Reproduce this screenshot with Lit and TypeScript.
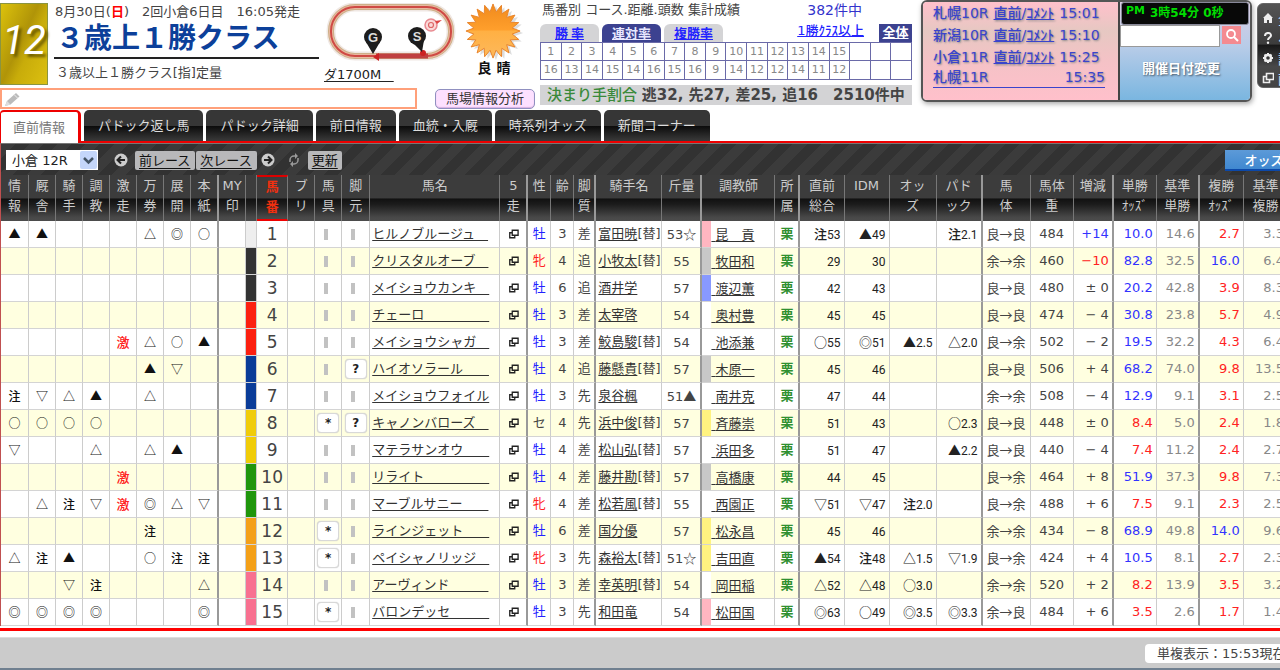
import { LitElement, html, svg, css, nothing } from "lit";
import { customElement, state } from "lit/decorators.js";
import { classMap } from "lit/directives/class-map.js";

interface Horse {
  no: number;
  frame: string;
  marks: string;
  gear?: boolean;
  foot?: boolean;
  name: string;
  sex: string;
  age: number;
  style: string;
  jockey: string;
  changed: boolean;
  load: string;
  trainer: string;
  strip: string;
  scores: [string, string, string, string];
  going: string;
  weight: number;
  diff: string;
  odds: [string, string, string, string];
}

const h = (
  no: number, frame: string, marks: string, kit: string, name: string, sex: string, age: number,
  style: string, jockey: string, changed: boolean, load: string, trainer: string, strip: string,
  scores: string, going: string, weight: number, diff: string, odds: string,
): Horse => ({
  no, frame, marks, gear: kit.includes("g"), foot: kit.includes("f"), name, sex, age, style, jockey,
  changed, load, trainer, strip, scores: scores.split(",") as Horse["scores"], going, weight, diff,
  odds: odds.split(",") as Horse["odds"],
});

const HORSES: Horse[] = [
  h(1, "white", "▲▲___△◎○", "", "ヒルノブルージュ", "牡", 3, "差", "富田暁", true, "53☆", "昆　貢", "pink", "注53,▲49,,注2.1", "良→良", 484, "+14", "10.0,14.6,2.7,3.3"),
  h(2, "black", "________", "", "クリスタルオーブ", "牝", 4, "追", "小牧太", true, "55", "牧田和", "gray", "29,30,,", "余→余", 460, "−10", "82.8,32.5,16.0,6.4"),
  h(3, "black", "________", "", "メイショウカンキ", "牡", 6, "追", "酒井学", false, "57", "渡辺薫", "blue", "42,43,,", "良→良", 480, "± 0", "20.2,42.8,3.9,8.3"),
  h(4, "red", "________", "", "チェーロ", "牡", 3, "差", "太宰啓", false, "54", "奥村豊", "white", "45,45,,", "良→良", 474, "− 4", "30.8,23.8,5.7,4.9"),
  h(5, "red", "____激△○▲", "", "メイショウシャガ", "牡", 3, "差", "鮫島駿", true, "54", "池添兼", "white", "○55,◎51,▲2.5,△2.0", "良→余", 502, "− 2", "19.5,32.2,4.3,6.4"),
  h(6, "blue", "_____▲▽_", "f", "ハイオソラール", "牡", 4, "追", "藤懸貴", true, "57", "木原一", "gray", "45,46,,", "良→良", 506, "+ 4", "68.2,74.0,9.8,13.5"),
  h(7, "blue", "注▽△▲_△__", "", "メイショウフォイル", "牡", 3, "先", "泉谷楓", false, "51▲", "南井克", "white", "47,44,,", "余→余", 508, "− 4", "12.9,9.1,3.1,2.5"),
  h(8, "yellow", "○○○○____", "gf", "キャノンバローズ", "セ", 4, "先", "浜中俊", true, "57", "斉藤崇", "yellow", "51,43,,○2.3", "良→良", 448, "± 0", "8.4,5.0,2.4,1.8"),
  h(9, "yellow", "▽__△_△▲_", "", "マテラサンオウ", "牡", 4, "差", "松山弘", true, "57", "浜田多", "white", "51,47,,▲2.2", "良→良", 440, "− 4", "7.4,11.2,2.4,2.7"),
  h(10, "green", "____激___", "", "リライト", "牡", 4, "差", "藤井勘", true, "57", "高橋康", "gray", "44,45,,", "良→余", 464, "+ 8", "51.9,37.3,9.8,7.3"),
  h(11, "green", "_△注▽激◎△▽", "", "マーブルサニー", "牝", 4, "差", "松若風", true, "55", "西園正", "white", "▽51,▽47,注2.0,", "良→余", 488, "+ 6", "7.5,9.1,2.3,2.5"),
  h(12, "orange", "_____注__", "g", "ラインジェット", "牡", 6, "差", "国分優", false, "57", "松永昌", "yellow", "45,46,,", "余→余", 434, "− 8", "68.9,49.8,14.0,9.6"),
  h(13, "orange", "△注▲__○注注", "g", "ペイシャノリッジ", "牝", 3, "先", "森裕太", true, "51☆", "吉田直", "yellow", "▲54,注48,△1.5,▽1.9", "良→余", 424, "+ 4", "10.5,8.1,2.7,2.3"),
  h(14, "rose", "__▽注___△", "", "アーヴィンド", "牡", 3, "差", "幸英明", true, "54", "岡田稲", "white", "△52,△48,○3.0,", "余→余", 520, "+ 2", "8.2,13.9,3.5,3.2"),
  h(15, "rose", "◎◎◎◎___◎", "g", "バロンデッセ", "牡", 3, "先", "和田竜", false, "54", "松田国", "pink", "◎63,○49,◎3.5,◎3.3", "余→良", 484, "+ 6", "3.5,2.6,1.7,1.4"),
];

/* label, width, heavy right rule */
const COLUMNS: [string, number, boolean?][] = [
  ["情 報", 28], ["厩 舎", 27], ["騎 手", 27], ["調 教", 27], ["激 走", 27], ["万 券", 27], ["展 開", 27],
  ["本 紙", 28, true], ["MY 印", 27], ["", 11], ["馬 番", 31], ["ブ リ", 27], ["馬 具", 27], ["脚 元", 28],
  ["馬名", 130], ["5 走", 28, true], ["性", 23], ["齢", 23], ["脚 質", 22, true], ["騎手名", 66],
  ["斤量", 40, true], ["調教師", 73], ["所 属", 25, true], ["直前 総合", 44], ["IDM", 45], ["オッ ズ", 47],
  ["パド ック", 46, true], ["馬 体", 48], ["馬体 重", 43], ["増減", 40, true], ["単勝 ｵｯｽﾞ", 43],
  ["基準 単勝", 43, true], ["複勝 ｵｯｽﾞ", 44], ["基準 複勝", 44],
];

const windowsIcon = svg`<path d="M4.5 1.5h7v6h-7z M4 4.5H1.500v6h6V8" fill="none" stroke="currentColor" stroke-width="1.6"/>`;

@customElement("race-header")
class RaceHeader extends LitElement {
  static styles = css`
    :host { display: block; }
    * { box-sizing: border-box; }
    a { color: inherit; }
    .bar { display: flex; align-items: flex-start; height: 110px; }
    .race { display: flex; flex-direction: column; flex: none; width: 540px; gap: 4px; padding-top: 3px; }
    .info { display: flex; height: 81px; }
    .badge {
      flex: none; width: 48px; height: 82px; border: 1px solid #8a9440; color: #fff; padding-bottom: 6px;
      background: linear-gradient(115deg, #dcc20c, #b09408 45%, #c8ac0a 60%, #dcc010);
      display: flex; align-items: center; justify-content: center;
      font: italic 400 40px/48px Roboto, sans-serif; text-shadow: 3px 3px 3px #6b5a00;
    }
    .titles { margin-left: 6px; width: 265px; flex: none; white-space: nowrap; }
    .when { margin: 0; line-height: 18px; padding-left: 1px; white-space: pre; }
    .sun-day { color: #f00; font-weight: bold; }
    h1 { margin: 0; font-size: 28px; line-height: 36px; font-weight: bold; color: #0c409a; padding-left: 2px; border-bottom: 2px solid #222; }
    .cond { margin: 0; padding: 4px 0 0 2px; line-height: 20px; }
    .course { margin-left: 5px; width: 140px; flex: none; }
    .course svg { display: block; }
    .dist { white-space: pre; line-height: 18px; display: block; margin-top: 4px; color: #222; text-underline-offset: 2px; }
    .weather { width: 60px; flex: none; text-align: center; font-weight: bold; font-size: 14px; line-height: 14px; color: #111; }
    .weather svg { display: block; margin: 0 auto; }
    .memo { display: flex; align-items: center; gap: 18px; }
    .note { display: flex; align-items: center; width: 417px; height: 21px; border: 2px solid #ffa07a; padding-left: 2px; background: #fff; }
    .note input { flex: 1; border: 0; outline: 0; background: none; height: 16px; padding: 0 4px; font: inherit; }
    .analyze {
      width: 100px; height: 20px; padding: 0; border: 1px solid #9090c0; border-radius: 5px; font: inherit; line-height: 18px; color: #333;
      background: #fde0ff; box-shadow: inset 0 -1px 1px #d8b0e0; white-space: nowrap;
    }
    .stats { flex: none; width: 372px; }
    .line { display: flex; line-height: 20px; padding: 0 2px; white-space: nowrap; }
    .line b { font-weight: normal; color: #33c; margin-left: auto; margin-right: 48px; font-size: 14px; }
    .picks { display: flex; gap: 3px; align-items: flex-end; height: 22px; }
    .pick {
      width: 59px; height: 18px; padding: 0; border: 0; border-radius: 6px 6px 0 0; background: #d4d4d6; color: #22f;
      font: bold 13px/18px "Noto Sans CJK JP", sans-serif; text-decoration: underline;
    }
    .pick.on { background: #3c4290; color: #e8e8ff; }
    .klass { color: #22f; font-size: 13px; line-height: 22px; margin-left: auto; margin-right: 12px; white-space: nowrap; font-weight: 500; }
    .all { background: #3c4290; color: #fff; text-decoration: underline; font-weight: bold; line-height: 18px; width: 33px; text-align: center; }
    .nums { border-collapse: collapse; table-layout: fixed; width: 100%; font-size: 11px; color: #888; }
    .nums td { border: 1px solid #6a6aa8; padding: 0; text-align: center; height: 18px; line-height: 16px; }
    .nums tr + tr td { height: 19px; }
    .finish { margin: 5px 0 0; background: #d3d3d5; line-height: 20px; font-size: 15px; padding-left: 7px; white-space: pre; color: #444; }
    .finish strong { color: #3a8a3a; font-weight: 500; }
    .finish span { font-weight: bold; }
    .panel {
      flex: none; display: flex; width: 331px; height: 102px; margin: 0 5px 0 9px; border: 2px solid #555; border-radius: 6px;
      box-shadow: 1px 2px 5px #aaa; overflow: hidden;
    }
    .next {
      width: 197px; flex: none; margin: 0; padding: 0 0 0 10px; list-style: none; font-size: 14px; line-height: 22px; color: #3a44cc;
      text-shadow: 1px 1px 2px #888; white-space: nowrap; border-right: 2px solid #444; font-weight: 500;
      background: linear-gradient(#ffc0cb, #e6c8c2 30%, #f4c2c6 60%, #ffc0cb);
    }
    .next li { display: flex; gap: 5px; }
    .next .whole { display: flex; justify-content: space-between; width: 172px; border-bottom: 1px solid #3a44cc; line-height: 19px; text-decoration: none; }
    .tools { flex: 1; background: linear-gradient(#dccde4, #b8cce8 45%, #7ab6e0); }
    .clock {
      margin: 0 1px; background: #080808; border: 1px solid #889; border-radius: 3px; color: #0d0; height: 23px; line-height: 21px; padding-left: 4px;
      white-space: nowrap; font-weight: bold; font-size: 12px; display: flex; gap: 5px;
    }
    .clock small { font-size: 11px; line-height: 16px; }
    .search { display: flex; gap: 2px; }
    .search input { width: 100px; height: 22px; border: 1px solid #999; background: #fff; padding: 0 3px; font: inherit; }
    .search button { width: 19px; height: 18px; margin-top: 1px; border: 0; padding: 0; background: #f48a90; display: grid; place-items: center; }
    .date { display: block; color: #fff; padding-left: 22px; line-height: 20px; margin-top: 12px; font-weight: bold; text-decoration: none; text-shadow: 1px 1px 2px #456; }
    .menu {
      flex: none; width: 120px; height: 85px; margin-top: 3px; border: 1px solid #666; border-radius: 6px; color: #fff;
      background: linear-gradient(#555, #3c3c3c 48%, #181818 50%, #484848 75%, #444); padding: 4px 0 0 4px;
    }
    .menu a { display: flex; align-items: center; gap: 4px; height: 20px; color: #cfe0ff; text-decoration: none; white-space: nowrap; }
    .menu svg { color: #eee; flex: none; }
  `;

  private sunPoints() {
    const n = 20;
    return Array.from({ length: n * 2 }, (_, i) => {
      const r = i % 2 ? 20 : 28;
      const a = (Math.PI * i) / n - Math.PI / 2;
      return `${(29 + r * Math.cos(a)).toFixed(1)},${(29 + r * Math.sin(a)).toFixed(1)}`;
    }).join(" ");
  }

  render() {
    const top = Array.from({ length: 18 }, (_, i) => (i < 15 ? i + 1 : ""));
    const low = [16, 13, 14, 15, 14, 16, 15, 16, 9, 14, 12, 12, 14, 11, 12, "", "", ""];
    const races = [["札幌10R", "15:01"], ["新潟10R", "15:10"], ["小倉11R", "15:25"]];
    return html`<header class="bar">
      <div class="race">
        <div class="info">
          <div class="badge">12</div>
          <div class="titles">
            <p class="when">8月30日(<span class="sun-day">日</span>)　2回小倉6日目　16:05発走</p>
            <h1>３歳上１勝クラス</h1>
            <p class="cond">３歳以上１勝クラス[指]定量</p>
          </div>
          <div class="course">
            <svg width="134" height="59" viewBox="0 0 134 59" aria-hidden="true">
              <rect x="7" y="4" width="120" height="49" rx="24" fill="none" stroke="#f0e8e4" stroke-width="9"/>
              <rect x="7" y="4" width="120" height="49" rx="24" fill="none" stroke="#cdb088" stroke-width="6"/>
              <rect x="7" y="4" width="120" height="49" rx="24" fill="none" stroke="#e8b8a0" stroke-width="4"/>
              <rect x="7" y="4" width="120" height="49" rx="24" fill="none" stroke="#cf4a44" stroke-width="2"/>
              <path d="M52 53H104" stroke="#c04040" stroke-width="5"/>
              <path d="M49 54l6-4v8z" fill="#c22"/>
              <circle cx="99" cy="50" r="3" fill="#c22"/>
              <circle cx="107" cy="22" r="6" fill="#fbd8d8" stroke="#e88a90" stroke-width="1.500"/>
              <circle cx="107" cy="22" r="2.500" fill="none" stroke="#d66" stroke-width="1.200"/>
              <path d="M111 18l7-1-5 4z" fill="#d44"/>
              <path d="M42 39h14l-7 12z M86 37h14l-2 12z" fill="#1c1c1c"/>
              <circle cx="49" cy="34" r="9" fill="#1c1c1c"/>
              <circle cx="93" cy="33" r="9" fill="#1c1c1c"/>
              <text x="49" y="39" text-anchor="middle" font-family="Liberation Sans, sans-serif" font-weight="bold" font-size="13" fill="#ddd">G</text>
              <text x="93" y="38" text-anchor="middle" font-family="Liberation Sans, sans-serif" font-weight="bold" font-size="13" fill="#ddd">S</text>
            </svg>
            <a class="dist" href="#course">ダ1700M   </a>
          </div>
          <div class="weather">
            <svg width="60" height="58" viewBox="0 0 60 60" aria-hidden="true">
              <defs><linearGradient id="sun" x1="0" y1="0" x2="0" y2="1">
                <stop offset="0" stop-color="#f08a1c"/><stop offset=".48" stop-color="#ff9f2c"/>
                <stop offset=".5" stop-color="#ffb043"/><stop offset="1" stop-color="#fdb95c"/>
              </linearGradient></defs>
              <polygon points=${this.sunPoints()} fill="#bbb" transform="translate(3 2)" opacity=".5"/>
              <polygon points=${this.sunPoints()} fill="url(#sun)" stroke="#e8842a" stroke-width="1"/>
            </svg>
            良 晴
          </div>
        </div>
        <div class="memo">
          <label class="note">
            <svg width="17" height="16" viewBox="0 0 17 16" aria-hidden="true">
              <path d="M1 15l2-5 9-8 3.500 3.500-9 8z" fill="#bbb"/><path d="M1 15l2-5 3.500 3.500z" fill="#ddd"/><path d="M10 3.500l3.500 3.500" stroke="#eee"/>
            </svg>
            <input aria-label="メモ" />
          </label>
          <button class="analyze">馬場情報分析</button>
        </div>
      </div>

      <section class="stats">
        <div class="line"><span>馬番別 コース.距離.頭数 集計成績</span><b>382件中</b></div>
        <div class="picks">
          <button class="pick">勝 率</button>
          <button class="pick on">連対率</button>
          <button class="pick">複勝率</button>
          <a class="klass" href="#class">1勝ｸﾗｽ以上</a>
          <a class="all" href="#all">全体</a>
        </div>
        <table class="nums">
          <tr>${top.map((n) => html`<td>${n}</td>`)}</tr>
          <tr>${low.map((n) => html`<td>${n}</td>`)}</tr>
        </table>
        <p class="finish"><strong>決まり手割合</strong> <span>逃32, 先27, 差25, 追16　2510件中</span></p>
      </section>

      <div class="panel">
        <ul class="next">
          ${races.map(([r, t]) => html`<li><span>${r}</span><span><a href="#last">直前</a>/<a href="#comment">ｺﾒﾝﾄ</a></span><span>${t}</span></li>`)}
          <li><a class="whole" href="#sapporo11"><span>札幌11R</span><span>15:35</span></a></li>
        </ul>
        <div class="tools">
          <div class="clock"><small>PM</small><span>3時54分 0秒</span></div>
          <div class="search">
            <input type="text" aria-label="検索" />
            <button aria-label="検索">
              <svg width="14" height="14" viewBox="0 0 14 14"><circle cx="6" cy="6" r="4" fill="none" stroke="#fff" stroke-width="1.800"/><path d="M9 9l4 4" stroke="#fff" stroke-width="2"/></svg>
            </button>
          </div>
          <a class="date" href="#date">開催日付変更</a>
        </div>
      </div>

      <nav class="menu">
        <a href="#home"><svg width="12" height="12" viewBox="0 0 12 12"><path d="M6 1L1 6h1v5h3V8h2v3h3V6h1z" fill="currentColor"/></svg>全</a>
        <a href="#help"><svg width="12" height="12" viewBox="0 0 12 12"><path d="M3 4c0-4 6-4 6-.500C9 5.500 6 5.500 6 8" fill="none" stroke="currentColor" stroke-width="2"/><circle cx="6" cy="10.800" r="1.200" fill="currentColor"/></svg>ヘ</a>
        <a href="#config"><svg width="12" height="12" viewBox="0 0 12 12"><circle cx="6" cy="6" r="3" fill="none" stroke="currentColor" stroke-width="2.400"/><path d="M6 1v2M6 9v2M1 6h2M9 6h2M2.500 2.500l1 1M8.500 8.500l1 1M9.500 2.500l-1 1M3.500 8.500l-1 1" stroke="currentColor" stroke-width="2"/></svg>設</a>
        <a href="#window"><svg width="12" height="12" viewBox="0 0 12 12">${windowsIcon}</svg>画</a>
      </nav>
    </header>`;
  }
}

@customElement("race-table")
class RaceTable extends LitElement {
  static styles = css`
    :host { display: block; border-left: 1px solid #c05050; }
    * { box-sizing: border-box; }
    table { table-layout: fixed; width: 100%; min-width: 1287px; border-spacing: 0; }
    th, td { padding: 0; overflow: hidden; white-space: nowrap; border-right: 1px solid #ccc; text-align: center; }
    th {
      height: 46px; vertical-align: top; font-weight: normal; color: #ccc; line-height: 20px; padding: 1px 0 4px; border-right-color: #777; white-space: pre-line;
    }
    thead tr { background: linear-gradient(#3c3c3c 50%, #111 52%, #1c1c1c 64%, #484848 92%, #4c4c4c); }
    td { height: 27px; line-height: 20px; border-bottom: 1px solid #d4d4d4; }
    tbody tr:nth-child(even) { background: #ffffe0; }
    .heavy { border-right: 2px solid #999; }
    .number { border-top: 2px solid #d00; border-bottom: 2px solid #e00; color: #f03010; font-weight: bold; padding: 0; line-height: 20px; }
    .sym { font-family: "Noto Sans CJK JP", sans-serif; }
    .hot { color: #f22; font-weight: 500; }
    .mark { color: #111; font-weight: 500; font-size: 12px; }
    .no { font-size: 17px; color: #444; }
    .stick { display: inline-block; width: 4px; height: 11px; background: #c2c2c2; margin-right: 5px; vertical-align: middle; }
    .chip {
      width: 22px; height: 20px; padding: 0; border: 1px solid #d8d8d8; border-radius: 4px; background: #fff; box-shadow: 0 0 1px #bbb; color: #222;
      font: bold 12px/18px "DejaVu Sans", sans-serif; display: block; margin: 0 auto;
    }
    .left { text-align: left; padding-left: 2px; }
    a { color: #333; text-underline-offset: 2px; }
    .name { white-space: pre; }
    .open { border: 0; background: none; padding: 0; display: block; margin: 0 auto; height: 10px; color: #222; }
    .open svg { display: block; }
    .male { color: #22f; } .female { color: #f22; }
    .trainer { text-align: left; }
    .tr { display: flex; height: 26px; align-items: center; }
    .tr a { white-space: pre; padding-top: 1px; }
    .strip { width: 9px; height: 26px; }
    .belong { color: #2f9030; font-weight: bold; }
    .score { text-align: right; padding-right: 3px; color: #222; font-size: 12px; font-family: Roboto, "Noto Sans CJK JP", sans-serif; }
    .score .sym { font-size: 13px; font-weight: 500; }
    .right { text-align: right; padding-right: 3px; }
    .base { color: #888; }
    .blue { color: #33f; } .red { color: #f22; }
    .f-white { background: #eee; } .f-black { background: #333; } .f-red { background: #fc2010; } .f-blue { background: #0a3c98; }
    .f-yellow { background: #f0cc08; } .f-green { background: #20960c; } .f-orange { background: #f4a018; } .f-rose { background: #f87090; }
    .s-pink { background: #ffb6c1; } .s-gray { background: #c8c8c8; } .s-blue { background: #8899ff; } .s-white { background: #fff; } .s-yellow { background: #fff380; }
  `;

  private odds(v: string) {
    return Number(v) >= 10 ? "blue" : "red";
  }

  private row(r: Horse) {
    const sexClass = { male: r.sex === "牡", female: r.sex === "牝" };
    return html`<tr>
      ${[...r.marks].map((m, i) => html`<td class=${classMap({ mark: m !== "激", sym: true, hot: m === "激", heavy: i === 7 })}>${m === "_" ? nothing : m}</td>`)}
      <td></td>
      <td class="f-${r.frame}"></td>
      <td class="no">${r.no}</td>
      <td></td>
      <td>${r.gear ? html`<button class="chip">*</button>` : html`<span class="stick"></span>`}</td>
      <td>${r.foot ? html`<button class="chip">?</button>` : html`<span class="stick"></span>`}</td>
      <td class="left"><a class="name" href="#horse-${r.no}">${r.name.padEnd(9, "　")}</a></td>
      <td class="heavy"><button class="open" aria-label="5走"><svg width="11" height="10" viewBox="0 0 12 12">${windowsIcon}</svg></button></td>
      <td class=${classMap(sexClass)}>${r.sex}</td>
      <td>${r.age}</td>
      <td class="heavy">${r.style}</td>
      <td class="left"><a href="#jockey-${r.no}">${r.jockey}</a>${r.changed ? "[替]" : nothing}</td>
      <td class="heavy">${r.load.slice(0, 2)}<span class="sym">${r.load.slice(2)}</span></td>
      <td class="trainer"><div class="tr"><span class="strip s-${r.strip}"></span><a href="#trainer-${r.no}"> ${r.trainer}</a></div></td>
      <td class="belong heavy">栗</td>
      ${r.scores.map((s, i) => {
        const sym = s.replace(/[\d.]/g, "");
        return html`<td class=${classMap({ score: true, heavy: i === 3 })}><span class="sym">${sym}</span>${s.slice(sym.length)}</td>`;
      })}
      <td class="sym">${r.going}</td>
      <td>${r.weight}</td>
      <td class=${classMap({ right: true, heavy: true, blue: r.diff === "+14", red: r.diff === "−10" })}>${r.diff}</td>
      <td class="right ${this.odds(r.odds[0])}">${r.odds[0]}</td>
      <td class="right base heavy">${r.odds[1]}</td>
      <td class="right ${this.odds(r.odds[2])}">${r.odds[2]}</td>
      <td class="right base">${r.odds[3]}</td>
    </tr>`;
  }

  render() {
    return html`<table>
      <colgroup>${COLUMNS.map(([, w]) => html`<col style="width:${w}px" />`)}</colgroup>
      <thead><tr>
        ${COLUMNS.map(([label, , heavy]) => html`<th class=${classMap({ heavy: !!heavy, number: label === "馬 番" })}>${label.replace(" ", "\n")}</th>`)}
      </tr></thead>
      <tbody>${HORSES.map((r) => this.row(r))}</tbody>
    </table>`;
  }
}

@customElement("app-root")
class AppRoot extends LitElement {
  @state() private tab = 0;

  private tabs = ["直前情報", "パドック返し馬", "パドック詳細", "前日情報", "血統・入厩", "時系列オッズ", "新聞コーナー"];

  static styles = css`
    :host {
      display: block; min-height: 100vh; overflow: hidden; background: #fff; color: #444;
      font-family: "DejaVu Sans", "Noto Sans CJK JP", sans-serif; font-size: 13px;
    }
    * { box-sizing: border-box; }
    .tabs { display: flex; gap: 3px; height: 33px; border-bottom: 2px solid #e00; }
    .tab {
      height: 31px; padding: 0 14px; border: 0; border-radius: 5px 5px 0 0; font: inherit; line-height: 30px; color: #ddd; white-space: nowrap;
      background: linear-gradient(#363636 50%, #0c0c0c 53%, #222 75%, #3a3a3a);
    }
    .tab.on { height: 33px; padding: 0 13px 0 12px; color: #777; background: #fff; border: solid #e00; border-width: 2px 3px 0 1px; border-radius: 4px 5px 0 0; }
    .toolbar {
      display: flex; align-items: center; height: 32px; border-left: 1px solid #c05050; border-top: 1px solid #777; padding: 1px 0 0 5px; min-width: 1325px;
      background: repeating-linear-gradient(135deg, #3b3b3b 0 10px, #323232 10px 20px);
    }
    .pick { display: grid; width: 92px; height: 20px; background: #fff; margin-right: 16px; }
    .pick > * { grid-area: 1 / 1; }
    select { appearance: none; border: 0; background: none; font: inherit; color: #222; padding: 0 0 0 6px; height: 20px; width: 100%; }
    .arrow { justify-self: end; align-self: center; pointer-events: none; margin-right: 1px; }
    .ico { flex: none; margin-right: 7px; }
    .links { display: flex; gap: 1px; margin-right: 4px; }
    .link { background: #b8b8ba; color: #111; padding: 0 4px; line-height: 19px; height: 19px; border-radius: 2px; white-space: nowrap; text-underline-offset: 3px; }
    .links .link { padding: 0 5px 0 4px; }
    .spin { margin: 0 8px 0 6px; }
    .odds { margin-left: auto; width: 100px; height: 21px; border: 0; border-bottom: 2px solid #0c48a8; background: linear-gradient(#5c9ad8, #4088d0); color: #fff; font: inherit; font-weight: 500; padding: 0 0 0 4px; white-space: nowrap; }
    .end { border-bottom: 3px solid #f00; height: 5px; }
    .foot { margin-top: 6px; height: 31px; background: #cbcbcb; border-top: 1px solid #ddd; display: flex; align-items: center; justify-content: flex-end; }
    .stamp { flex: none; background: #fff; border-radius: 4px; line-height: 19px; padding: 0 12px; margin-right: -14px; width: 149px; white-space: nowrap; }
    .edge { height: 2px; background: #708090; }
  `;

  render() {
    return html`
      <race-header></race-header>
      <nav class="tabs">
        ${this.tabs.map((t, i) => html`<button class=${classMap({ tab: true, on: i === this.tab })} @click=${() => (this.tab = i)}>${t}</button>`)}
      </nav>
      <div class="toolbar">
        <label class="pick">
          <select aria-label="レース"><option>小倉 12R</option></select>
          <svg class="arrow" width="17" height="18" viewBox="0 0 17 18"><rect width="17" height="18" rx="2" fill="#c4d6fa"/><path d="M4 7l4.500 4.500L13 7" fill="none" stroke="#456" stroke-width="2.500"/></svg>
        </label>
        <svg class="ico" width="14" height="14" viewBox="0 0 14 14"><circle cx="7" cy="7" r="6.500" fill="#ccc"/><path d="M11 7H4M7 3.500L3.500 7 7 10.500" fill="none" stroke="#222" stroke-width="2"/></svg>
        <div class="links"><a class="link" href="#prev">前レース</a><a class="link" href="#next">次レース</a></div>
        <svg class="ico" width="14" height="14" viewBox="0 0 14 14"><circle cx="7" cy="7" r="6.500" fill="#ccc"/><path d="M3 7h7M7 3.500L10.500 7 7 10.500" fill="none" stroke="#222" stroke-width="2"/></svg>
        <svg class="spin" width="12" height="14" viewBox="0 0 12 14"><path d="M2 9V7a4 4 0 0 1 4-4h1M10 5v2a4 4 0 0 1-4 4H5" fill="none" stroke="#999" stroke-width="1.500"/><path d="M7 0l3 3-3 3zM5 8l-3 3 3 3z" fill="#999"/></svg>
        <a class="link" href="#reload">更新</a>
        <button class="odds">オッズ投票</button>
      </div>
      <race-table></race-table>
      <div class="end"></div>
      <footer class="foot"><span class="stamp">単複表示：15:53現在</span></footer>
      <div class="edge"></div>
    `;
  }
}
